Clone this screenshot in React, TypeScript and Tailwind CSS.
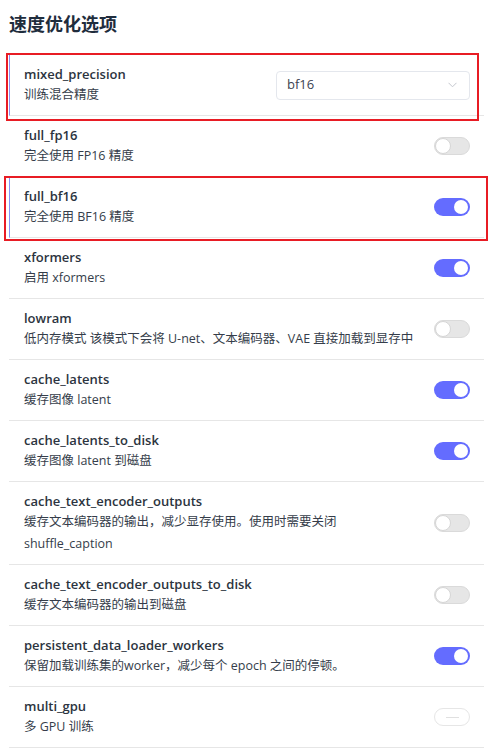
import React from "react";

type Row = {
  name: string;
  desc: string[];
  kind: "select" | "on" | "off" | "disabled";
  marked?: boolean;
};

const rows: Row[] = [
  { name: "mixed_precision", desc: ["训练混合精度"], kind: "select", marked: true },
  { name: "full_fp16", desc: ["完全使用 FP16 精度"], kind: "off" },
  { name: "full_bf16", desc: ["完全使用 BF16 精度"], kind: "on", marked: true },
  { name: "xformers", desc: ["启用 xformers"], kind: "on" },
  {
    name: "lowram",
    desc: ["低内存模式 该模式下会将 U-net、文本编码器、VAE 直接加载到显存中"],
    kind: "off",
  },
  { name: "cache_latents", desc: ["缓存图像 latent"], kind: "on" },
  { name: "cache_latents_to_disk", desc: ["缓存图像 latent 到磁盘"], kind: "on" },
  {
    name: "cache_text_encoder_outputs",
    desc: ["缓存文本编码器的输出，减少显存使用。使用时需要关闭", "shuffle_caption"],
    kind: "off",
  },
  { name: "cache_text_encoder_outputs_to_disk", desc: ["缓存文本编码器的输出到磁盘"], kind: "off" },
  {
    name: "persistent_data_loader_workers",
    desc: ["保留加载训练集的worker，减少每个 epoch 之间的停顿。"],
    kind: "on",
  },
  { name: "multi_gpu", desc: ["多 GPU 训练"], kind: "disabled" },
];

const Toggle = ({ kind }: { kind: Row["kind"] }) => {
  if (kind === "on") {
    return (
      <div className="w-[36px] h-[18px] rounded-full bg-[#646cff] flex items-center justify-end pr-[2px]">
        <div className="w-[14px] h-[14px] rounded-full bg-white" />
      </div>
    );
  }
  if (kind === "disabled") {
    return (
      <div className="w-[36px] h-[18px] rounded-full bg-white border border-[#e6e6e6] flex items-center justify-center">
        <div className="w-[13px] h-px bg-[#e0e0e0]" />
      </div>
    );
  }
  return (
    <div className="w-[36px] h-[18px] rounded-full bg-[#e6e6e6] border border-[#dadada] flex items-center">
      <div className="w-[16px] h-[16px] rounded-full bg-white border border-[#d6d6d6]" />
    </div>
  );
};

const Select = () => (
  <div className="w-[194px] h-[29px] border border-[#e4e7ed] rounded-[4px] flex items-center justify-between pl-[10px] pr-[12px]">
    <span className="text-[13px] text-[#3c4452]">bf16</span>
    <svg width="9" height="6" viewBox="0 0 9 6" fill="none">
      <path d="M0.5 0.8 L4.5 4.8 L8.5 0.8" stroke="#c4c7ce" strokeWidth="1" />
    </svg>
  </div>
);

const App = () => {
  return (
    <div
      className="relative w-[500px] h-[753px] overflow-hidden bg-white"
      style={{ fontFamily: '"Open Sans", "Noto Sans CJK SC", sans-serif' }}
    >
      <h2 className="pl-[9px] pt-[12px] text-[18px] leading-[24px] font-bold text-[#1f2d3d]">
        速度优化选项
      </h2>
      <div className="mt-[19px] ml-[9px] w-[475px]">
        {rows.map((r) => (
          <div
            key={r.name}
            className={
              "flex items-center justify-between border-b border-[#e6e6e6] pr-[14px] py-[9px] " +
              (r.marked ? "border-l border-l-[#8a90f5] pl-[14px]" : "pl-[15px]")
            }
          >
            <div>
              <div className="text-[13px] leading-[20px] font-semibold text-[#2c3440]">
                {r.name}
              </div>
              {r.desc.map((d) => (
                <div key={d} className="text-[12.5px] leading-[22px] text-[#353d4a]">
                  {d}
                </div>
              ))}
            </div>
            {r.kind === "select" ? <Select /> : <Toggle kind={r.kind} />}
          </div>
        ))}
      </div>
      <div className="absolute left-[6px] top-[53px] w-[473px] h-[68px] border-2 border-[#e81c24]" />
      <div className="absolute left-[4px] top-[176px] w-[484px] h-[65px] border-2 border-[#e81c24]" />
    </div>
  );
};

export default App;
